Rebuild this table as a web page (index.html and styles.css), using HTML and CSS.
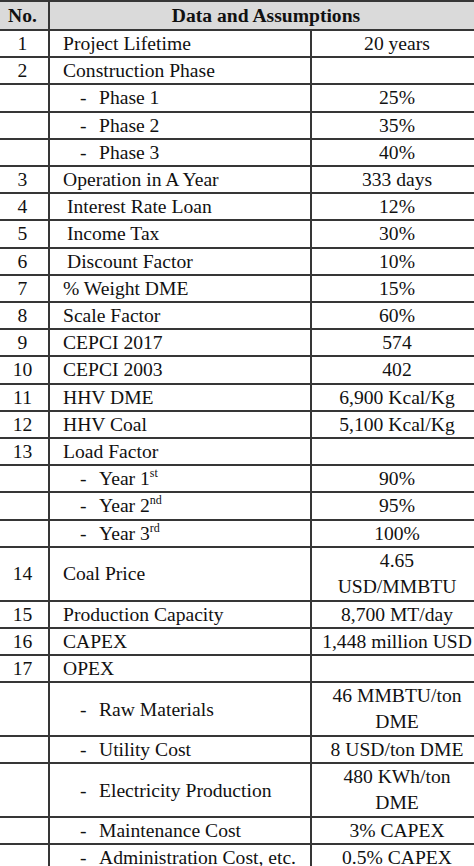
FILE: index.html
```html
<!DOCTYPE html>
<html>
<head>
<meta charset="utf-8">
<link rel="stylesheet" href="styles.css">
</head>
<body>
<table class="data">
  <colgroup>
    <col class="c-no">
    <col class="c-label">
    <col class="c-val">
  </colgroup>
  <thead>
    <tr class="head">
      <th>No.</th>
      <th colspan="2">Data and Assumptions</th>
    </tr>
  </thead>
  <tbody class="upper">
    <tr><td class="no">1</td><td class="lbl">Project Lifetime</td><td class="val">20 years</td></tr>
    <tr><td class="no">2</td><td class="lbl">Construction Phase</td><td class="val"></td></tr>
    <tr><td class="no"></td><td class="lbl sub"><span class="dash">-</span>Phase 1</td><td class="val">25%</td></tr>
    <tr><td class="no"></td><td class="lbl sub"><span class="dash">-</span>Phase 2</td><td class="val">35%</td></tr>
    <tr><td class="no"></td><td class="lbl sub"><span class="dash">-</span>Phase 3</td><td class="val">40%</td></tr>
    <tr><td class="no">3</td><td class="lbl">Operation in A Year</td><td class="val">333 days</td></tr>
    <tr><td class="no">4</td><td class="lbl ind">Interest Rate Loan</td><td class="val">12%</td></tr>
    <tr><td class="no">5</td><td class="lbl ind">Income Tax</td><td class="val">30%</td></tr>
    <tr><td class="no">6</td><td class="lbl ind">Discount Factor</td><td class="val">10%</td></tr>
    <tr><td class="no">7</td><td class="lbl">% Weight DME</td><td class="val">15%</td></tr>
    <tr><td class="no">8</td><td class="lbl">Scale Factor</td><td class="val">60%</td></tr>
    <tr><td class="no">9</td><td class="lbl">CEPCI 2017</td><td class="val">574</td></tr>
    <tr><td class="no">10</td><td class="lbl">CEPCI 2003</td><td class="val">402</td></tr>
    <tr><td class="no">11</td><td class="lbl">HHV DME</td><td class="val">6,900 Kcal/Kg</td></tr>
    <tr><td class="no">12</td><td class="lbl">HHV Coal</td><td class="val">5,100 Kcal/Kg</td></tr>
    <tr><td class="no">13</td><td class="lbl">Load Factor</td><td class="val"></td></tr>
    <tr><td class="no"></td><td class="lbl sub"><span class="dash">-</span>Year 1<sup>st</sup></td><td class="val">90%</td></tr>
    <tr><td class="no"></td><td class="lbl sub"><span class="dash">-</span>Year 2<sup>nd</sup></td><td class="val">95%</td></tr>
    <tr><td class="no"></td><td class="lbl sub"><span class="dash">-</span>Year 3<sup>rd</sup></td><td class="val">100%</td></tr>
    <tr><td class="no">14</td><td class="lbl">Coal Price</td><td class="val two">4.65<br>USD/MMBTU</td></tr>
  </tbody>
  <tbody class="lower">
    <tr><td class="no">15</td><td class="lbl">Production Capacity</td><td class="val">8,700 MT/day</td></tr>
    <tr><td class="no">16</td><td class="lbl">CAPEX</td><td class="val">1,448 million USD</td></tr>
    <tr><td class="no">17</td><td class="lbl">OPEX</td><td class="val"></td></tr>
    <tr><td class="no"></td><td class="lbl sub"><span class="dash">-</span>Raw Materials</td><td class="val two">46 MMBTU/ton<br>DME</td></tr>
    <tr><td class="no"></td><td class="lbl sub"><span class="dash">-</span>Utility Cost</td><td class="val">8 USD/ton DME</td></tr>
    <tr><td class="no"></td><td class="lbl sub"><span class="dash">-</span>Electricity Production</td><td class="val two">480 KWh/ton<br>DME</td></tr>
    <tr><td class="no"></td><td class="lbl sub"><span class="dash">-</span>Maintenance Cost</td><td class="val">3% CAPEX</td></tr>
    <tr><td class="no"></td><td class="lbl sub"><span class="dash">-</span>Administration Cost, etc.</td><td class="val">0.5% CAPEX</td></tr>
  </tbody>
</table>
</body>
</html>
```
FILE: styles.css
```css
html, body {
  margin: 0;
  padding: 0;
  background: #ffffff;
  overflow: hidden;
}

.data {
  margin-left: -5px;
  margin-top: 0;
  width: 487px;
  table-layout: fixed;
  border-collapse: collapse;
  font-family: "Liberation Serif", "Times New Roman", serif;
  font-size: 19.6px;
  color: #111111;
}

.c-no { width: 53px; }
.c-label { width: 262px; }
.c-val { width: 172px; }

.data th,
.data td {
  border: 2px solid #363636;
  padding: 0;
  line-height: 25.2px;
  height: 25.2px;
  vertical-align: middle;
  white-space: nowrap;
}

.lower td {
  line-height: 25px;
  height: 25px;
}

.head th {
  background: #dadada;
  font-weight: bold;
  text-align: center;
  line-height: 27px;
  height: 27px;
}

.no {
  text-align: center;
}

.lbl {
  text-align: left;
  padding-left: 13px !important;
}

.lbl.ind {
  padding-left: 17px !important;
}

.lbl.sub {
  padding-left: 30px !important;
}

.dash {
  display: inline-block;
  width: 19px;
}

.val {
  text-align: center;
}

.upper .val.two {
  line-height: 26.2px;
}

.lower .val.two {
  line-height: 26px;
}

sup {
  font-size: 12px;
  line-height: 0;
  vertical-align: 8px;
}
```
